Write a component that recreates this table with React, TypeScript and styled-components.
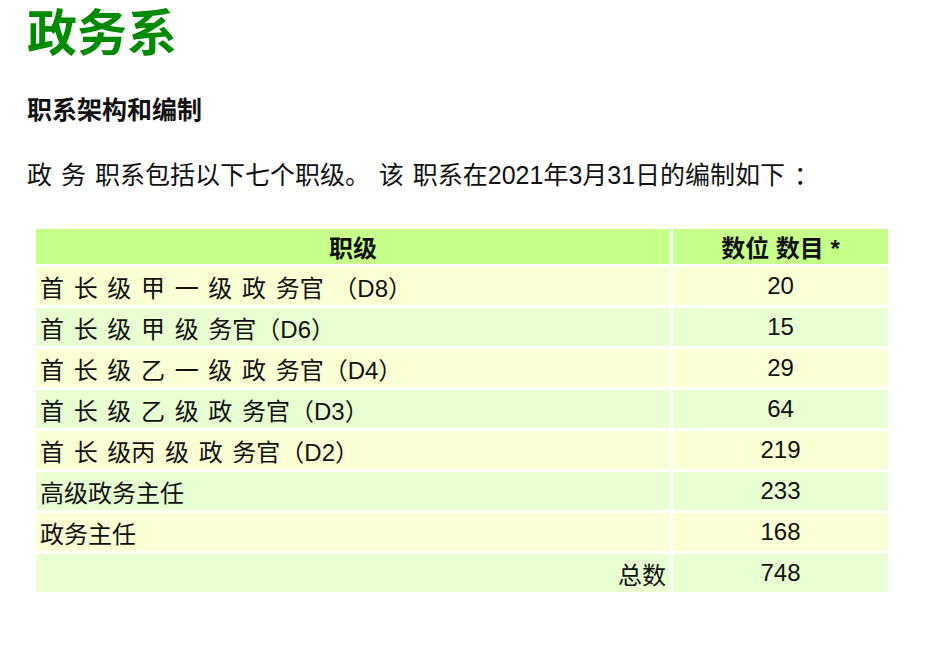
import styled, { createGlobalStyle } from "styled-components";

const GlobalStyle = createGlobalStyle`
  body {
    margin: 0;
    background: #ffffff;
    color: #111111;
    font-family: "Liberation Sans", "Noto Sans CJK SC", sans-serif;
  }
`;

const Page = styled.div`
  padding: 0 0 40px 27px;
`;

const Title = styled.h1`
  margin: 4px 0 0;
  font-size: 50px;
  line-height: 60px;
  font-weight: bold;
  color: #008a00;
`;

const Heading = styled.h3`
  margin: 31px 0 0;
  font-size: 25px;
  line-height: 30px;
  font-weight: bold;
  color: #111111;
`;

const Intro = styled.p`
  margin: 34px 0 0;
  font-size: 25px;
  line-height: 32px;
  word-spacing: 2px;
`;

const Table = styled.table`
  margin: 35px 0 0 6px;
  width: 858px;
  border-spacing: 3px;
  border-collapse: separate;
  font-size: 24px;
`;

const HeadCell = styled.th<{ $wide?: boolean }>`
  background: #c6ff8a;
  height: 34px;
  padding: 0 4px;
  text-align: center;
  font-weight: bold;
  width: ${(p) => (p.$wide ? "626px" : "auto")};
`;

const Row = styled.tr<{ $even: boolean }>`
  background: ${(p) => (p.$even ? "#e8ffd2" : "#faffd4")};
`;

const NameCell = styled.td<{ $right?: boolean }>`
  height: 38px;
  padding: 0 4px;
  text-align: ${(p) => (p.$right ? "right" : "left")};
  word-spacing: 3px;
`;

const CountCell = styled.td`
  height: 38px;
  padding: 0 4px;
  text-align: center;
`;

const ranks: [string, string][] = [
  ["首 长 级 甲 一 级 政 务官 （D8）", "20"],
  ["首 长 级 甲 级 务官（D6）", "15"],
  ["首 长 级 乙 一 级 政 务官（D4）", "29"],
  ["首 长 级 乙 级 政 务官（D3）", "64"],
  ["首 长 级丙 级 政 务官（D2）", "219"],
  ["高级政务主任", "233"],
  ["政务主任", "168"],
];

export default function App() {
  return (
    <Page>
      <GlobalStyle />
      <Title>政务系</Title>
      <Heading>职系架构和编制</Heading>
      <Intro>政 务 职系包括以下七个职级。 该 职系在2021年3月31日的编制如下 ：</Intro>
      <Table>
        <thead>
          <tr>
            <HeadCell $wide>职级</HeadCell>
            <HeadCell>数位 数目 *</HeadCell>
          </tr>
        </thead>
        <tbody>
          {ranks.map(([name, count], i) => (
            <Row key={name} $even={i % 2 === 1}>
              <NameCell>{name}</NameCell>
              <CountCell>{count}</CountCell>
            </Row>
          ))}
          <Row $even>
            <NameCell $right>总数</NameCell>
            <CountCell>748</CountCell>
          </Row>
        </tbody>
      </Table>
    </Page>
  );
}
